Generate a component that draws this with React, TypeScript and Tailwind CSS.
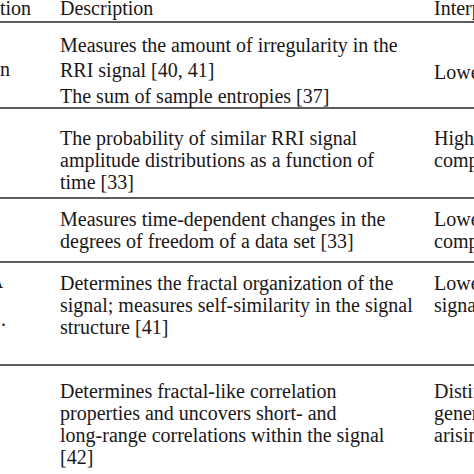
import React from 'react';

const Divider = () => <div className="h-[2px] w-full bg-[#5e5e5e]" />;

interface RowProps {
  height: string;
  first?: React.ReactNode;
  desc: React.ReactNode;
  interp: React.ReactNode;
}

const Row: React.FC<RowProps> = ({ height, first, desc, interp }) => (
  <div className={`flex ${height}`}>
    <div className="w-[60px] shrink-0 overflow-hidden">{first}</div>
    <div className="w-[374px] shrink-0">{desc}</div>
    <div className="flex-1 overflow-hidden whitespace-nowrap">{interp}</div>
  </div>
);

export default function App() {
  return (
    <div
      className="w-[474px] h-[474px] overflow-hidden bg-white text-[20px] leading-[22px] text-[#1a1718]"
      style={{ fontFamily: '"Liberation Serif", "Times New Roman", serif' }}
    >
      {/* header */}
      <div className="flex h-[21px] leading-[16px]">
        <div className="w-[60px] shrink-0 overflow-hidden whitespace-nowrap">tion</div>
        <div className="w-[374px] shrink-0">Description</div>
        <div className="flex-1 overflow-hidden whitespace-nowrap">Interpretation</div>
      </div>
      <Divider />

      <Row
        height="h-[84px]"
        first={<div className="pt-[35px]">n</div>}
        desc={
          <div className="pt-[10px] leading-[25px]">
            <div>Measures the amount of irregularity in the</div>
            <div>RRI signal [40, 41]</div>
            <div className="mt-px">The sum of sample entropies [37]</div>
          </div>
        }
        interp={<div className="pt-[38px]">Lower values indicate more regularity</div>}
      />
      <Divider />

      <Row
        height="h-[88px]"
        desc={
          <div className="pt-[18px]">
            <div>The probability of similar RRI signal</div>
            <div>amplitude distributions as a function of</div>
            <div>time [33]</div>
          </div>
        }
        interp={
          <div className="pt-[18px]">
            <div>Higher values indicate more</div>
            <div>complexity</div>
          </div>
        }
      />
      <Divider />

      <Row
        height="h-[62px]"
        desc={
          <div className="pt-[9px]">
            <div>Measures time-dependent changes in the</div>
            <div>degrees of freedom of a data set [33]</div>
          </div>
        }
        interp={
          <div className="pt-[9px]">
            <div>Lower values indicate less</div>
            <div>complexity</div>
          </div>
        }
      />
      <Divider />

      <Row
        height="h-[101px]"
        first={
          <div className="pt-[7px]">
            <div className="-ml-[11px]">A</div>
            <div className="mt-[16px] ml-[1px]">.</div>
          </div>
        }
        desc={
          <div className="pt-[9px]">
            <div>Determines the fractal organization of the</div>
            <div>signal; measures self-similarity in the signal</div>
            <div>structure [41]</div>
          </div>
        }
        interp={
          <div className="pt-[9px]">
            <div>Lower values indicate a smoother</div>
            <div>signal</div>
          </div>
        }
      />
      <Divider />

      <Row
        height="h-[108px]"
        desc={
          <div className="pt-[14px]">
            <div>Determines fractal-like correlation</div>
            <div>properties and uncovers short- and</div>
            <div>long-range correlations within the signal</div>
            <div>[42]</div>
          </div>
        }
        interp={
          <div className="pt-[14px]">
            <div>Distinguishes fluctuations</div>
            <div>generated by the system from those</div>
            <div>arising externally</div>
          </div>
        }
      />
    </div>
  );
}
